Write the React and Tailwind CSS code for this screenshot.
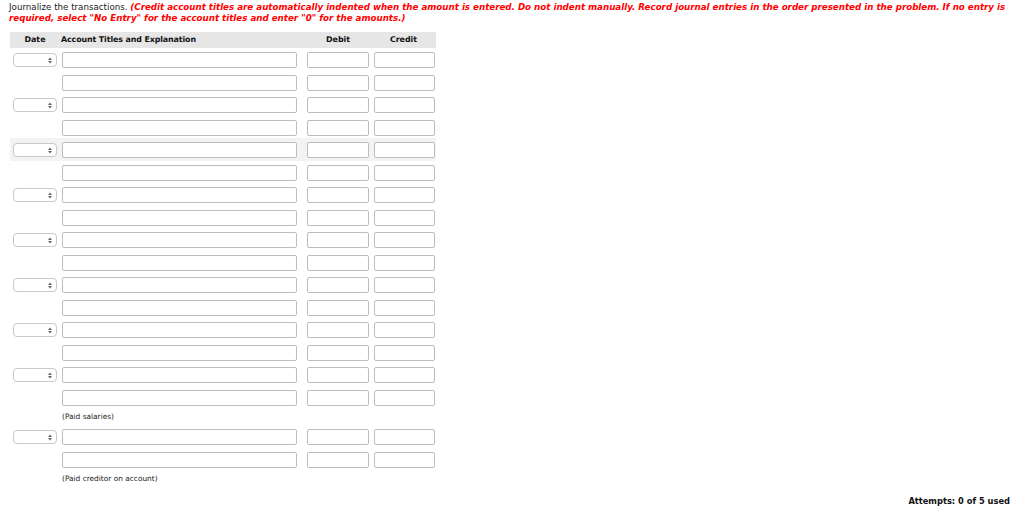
import React from "react";

const font = { fontFamily: '"DejaVu Sans", Verdana, sans-serif' };

function SelectBox() {
  return (
    <div className="ml-[3px] w-[44px] h-[14px] rounded-[4px] border border-[#c9c9c9] bg-white flex items-center justify-end pr-[4px]">
      <svg width="4" height="7" viewBox="0 0 4 7">
        <path d="M0 3 L2 0.5 L4 3 Z" fill="#666" />
        <path d="M0 4 L2 6.5 L4 4 Z" fill="#666" />
      </svg>
    </div>
  );
}

function Row({ date, hl }) {
  return (
    <div className={`flex h-[22.5px] pt-[4px] ${hl ? "bg-[#f3f3f3]" : ""}`}>
      <div className="w-[50px] h-[16px] flex items-center">{date ? <SelectBox /> : null}</div>
      <div className="w-[245px] pl-[2px]">
        <div className="w-[235px] h-[16px] rounded-[2px] border border-[#bdbdbd] bg-white" />
      </div>
      <div className="w-[66px] pl-[2px]">
        <div className="w-[62px] h-[16px] rounded-[2px] border border-[#bdbdbd] bg-white" />
      </div>
      <div className="w-[65px] pl-[3px]">
        <div className="w-[61px] h-[16px] rounded-[2px] border border-[#bdbdbd] bg-white" />
      </div>
    </div>
  );
}

function Note({ children }) {
  return (
    <div className="h-[17px] flex items-center pl-[52px] text-[7.4px] text-[#222]">{children}</div>
  );
}

export default function App() {
  const entries = [0, 1, 2, 3, 4, 5, 6, 7];
  return (
    <div className="w-[1024px] h-[515px] bg-white relative overflow-hidden" style={font}>
      <div className="pl-[9px] pt-[2px] text-[8.7px] leading-[11px] text-[#222] whitespace-nowrap">
        Journalize the transactions.{" "}
        <span className="text-[#ff0000] font-bold italic">
          (Credit account titles are automatically indented when the amount is entered. Do not indent manually. Record journal entries in the order presented in the problem. If no entry is
          <br />
          required, select "No Entry" for the account titles and enter "0" for the amounts.)
        </span>
      </div>
      <div className="ml-[10px] mt-[8px] w-[426px]">
        <div className="flex h-[16px] items-center bg-[#e6e6e6] text-[7.9px] font-bold text-[#111]">
          <div className="w-[50px] text-center">Date</div>
          <div className="w-[245px] pl-[1px] tracking-[-0.1px]">Account Titles and Explanation</div>
          <div className="w-[66px] text-center">Debit</div>
          <div className="w-[65px] text-center">Credit</div>
        </div>
        {entries.map((i) => (
          <React.Fragment key={i}>
            <Row date hl={i === 2} />
            <Row />
          </React.Fragment>
        ))}
        <Note>(Paid salaries)</Note>
        <Row date />
        <Row />
        <Note>(Paid creditor on account)</Note>
      </div>
      <div className="absolute right-[14px] top-[495px] text-[8.3px] font-bold text-[#111]">
        Attempts: 0 of 5 used
      </div>
    </div>
  );
}
